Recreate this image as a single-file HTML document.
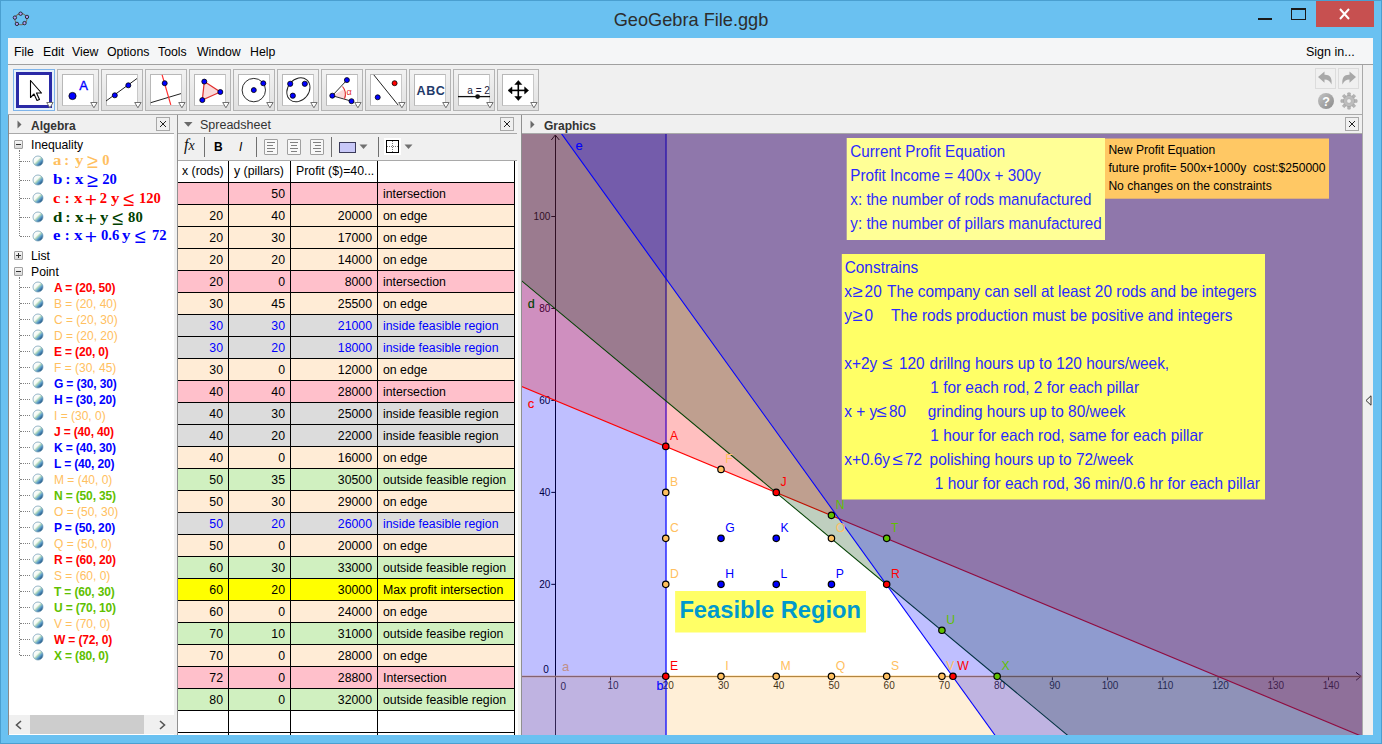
<!DOCTYPE html>
<html><head><meta charset="utf-8"><style>
*{margin:0;padding:0;box-sizing:border-box}
html,body{width:1382px;height:744px;overflow:hidden;background:#6ac1f1;font-family:"Liberation Sans",sans-serif;position:relative}
.ab{position:absolute}
.t{position:absolute;white-space:pre;line-height:1}
svg{overflow:visible}
</style></head><body>
<div class="ab" style="left:0;top:0;width:1px;height:744px;background:#4a9fd0"></div>
<div class="ab" style="left:1381px;top:0;width:1px;height:744px;background:#4a9fd0"></div>
<div class="ab" style="left:0;top:743px;width:1382px;height:1px;background:#4a9fd0"></div>
<div class="ab" style="left:0;top:0;width:1382px;height:1px;background:#4a9fd0"></div>
<div class="t" style="left:0;width:1382px;text-align:center;top:11px;font-size:18.2px;color:#2d2d2d">GeoGebra File.ggb</div>
<svg class="ab" style="left:0px;top:0px" width="40" height="40" viewBox="0 0 40 40">
<ellipse cx="20.9" cy="19.2" rx="6.1" ry="5.6" transform="rotate(-10 20.9 19.2)" fill="none" stroke="#7a6a5a" stroke-width="1"/>
<circle cx="20.6" cy="13.7" r="1.7" fill="#a89cf4" stroke="#111" stroke-width=".8"/>
<circle cx="27" cy="16.9" r="1.7" fill="#a89cf4" stroke="#111" stroke-width=".8"/>
<circle cx="24.5" cy="23.1" r="1.7" fill="#a89cf4" stroke="#111" stroke-width=".8"/>
<circle cx="16.9" cy="23.9" r="1.7" fill="#a89cf4" stroke="#111" stroke-width=".8"/>
<circle cx="14.9" cy="17.6" r="1.7" fill="#a89cf4" stroke="#111" stroke-width=".8"/>
</svg>
<div class="ab" style="left:1258px;top:18px;width:14px;height:2px;background:#1a1a1a"></div>
<div class="ab" style="left:1291px;top:8px;width:15px;height:12px;border:1px solid #1a1a1a;border-top-width:2px"></div>
<div class="ab" style="left:1316px;top:1px;width:58px;height:26px;background:#c75050"></div>
<svg class="ab" style="left:1338px;top:8px" width="13" height="12" viewBox="0 0 13 12"><path d="M2 1 L11 11 M11 1 L2 11" stroke="#fff" stroke-width="2"/></svg>
<div class="ab" style="left:8px;top:38px;width:1365px;height:26px;background:#f5f6f7"></div>
<div class="ab" style="left:8px;top:64px;width:1365px;height:1px;background:#a0a0a0"></div>
<div class="t" style="left:14px;top:45.6px;font-size:12.3px;color:#000">File</div>
<div class="t" style="left:43px;top:45.6px;font-size:12.3px;color:#000">Edit</div>
<div class="t" style="left:72px;top:45.6px;font-size:12.3px;color:#000">View</div>
<div class="t" style="left:107px;top:45.6px;font-size:12.3px;color:#000">Options</div>
<div class="t" style="left:158px;top:45.6px;font-size:12.3px;color:#000">Tools</div>
<div class="t" style="left:197px;top:45.6px;font-size:12.3px;color:#000">Window</div>
<div class="t" style="left:250px;top:45.6px;font-size:12.3px;color:#000">Help</div>
<div class="t" style="left:1306px;top:46px;font-size:12.5px;color:#000">Sign in...</div>
<div class="ab" style="left:8px;top:65px;width:1365px;height:670px;background:#f0f0f0"></div>
<div class="ab" style="left:8px;top:114px;width:1355px;height:1px;background:#a9a9a9"></div>
<div class="ab" style="left:1362px;top:65px;width:1px;height:670px;background:#a9a9a9"></div>
<div class="ab" style="left:13px;top:69px;width:42px;height:42px;border:1px solid #7eb4ea;background:#e5f1fb"></div>
<div class="ab" style="left:16px;top:72px;width:36px;height:36px;border:3px solid #2a2aa6;background:#fff"></div>
<svg class="ab" style="left:13px;top:69px" width="42" height="42" viewBox="0 0 42 42"><path d="M17.5 11.5 L17.5 28.5 L21 25 L24 31.5 L26.5 30.5 L23.5 24 L28.5 24 Z" fill="#fff" stroke="#000" stroke-width="1.1" stroke-linejoin="round"/><path d="M33.7 33.5 L40.1 33.5 L36.9 38.8 Z" fill="#fff" stroke="#707070" stroke-width="1"/></svg>
<div class="ab" style="left:57px;top:69px;width:42px;height:42px;border:1px solid #b4b4b4;background:linear-gradient(#f2f2f2,#e0e0e0)"></div>
<div class="ab" style="left:62px;top:74px;width:32px;height:32px;border:1px solid #c8c8c8;border-left-color:#b8b8b8;border-top-color:#b8b8b8;background:#fff"></div>
<svg class="ab" style="left:57px;top:69px" width="42" height="42" viewBox="0 0 42 42"><circle cx="15.5" cy="27" r="3.6" fill="#0000ff" stroke="#000" stroke-width=".8"/><text x="22.2" y="20.5" font-family="Liberation Sans" font-size="13" fill="#0000ff" stroke="#0000ff" stroke-width=".35">A</text><path d="M33.7 33.5 L40.1 33.5 L36.9 38.8 Z" fill="#fff" stroke="#707070" stroke-width="1"/></svg>
<div class="ab" style="left:101px;top:69px;width:42px;height:42px;border:1px solid #b4b4b4;background:linear-gradient(#f2f2f2,#e0e0e0)"></div>
<div class="ab" style="left:106px;top:74px;width:32px;height:32px;border:1px solid #c8c8c8;border-left-color:#b8b8b8;border-top-color:#b8b8b8;background:#fff"></div>
<svg class="ab" style="left:101px;top:69px" width="42" height="42" viewBox="0 0 42 42"><line x1="5" y1="32" x2="36" y2="9.5" stroke="#222" stroke-width="1"/><circle cx="13.8" cy="26.3" r="2.5" fill="#0000ff" stroke="#000" stroke-width=".8"/><circle cx="27.3" cy="16.3" r="2.5" fill="#0000ff" stroke="#000" stroke-width=".8"/><path d="M33.7 33.5 L40.1 33.5 L36.9 38.8 Z" fill="#fff" stroke="#707070" stroke-width="1"/></svg>
<div class="ab" style="left:145px;top:69px;width:42px;height:42px;border:1px solid #b4b4b4;background:linear-gradient(#f2f2f2,#e0e0e0)"></div>
<div class="ab" style="left:150px;top:74px;width:32px;height:32px;border:1px solid #c8c8c8;border-left-color:#b8b8b8;border-top-color:#b8b8b8;background:#fff"></div>
<svg class="ab" style="left:145px;top:69px" width="42" height="42" viewBox="0 0 42 42"><line x1="5.7" y1="33.7" x2="36" y2="24.6" stroke="#222" stroke-width="1"/><line x1="17.1" y1="5.9" x2="25.8" y2="35.8" stroke="#ff3030" stroke-width="1.2"/><circle cx="19.7" cy="14.2" r="2.5" fill="#0000ff" stroke="#000" stroke-width=".8"/><path d="M33.7 33.5 L40.1 33.5 L36.9 38.8 Z" fill="#fff" stroke="#707070" stroke-width="1"/></svg>
<div class="ab" style="left:189px;top:69px;width:42px;height:42px;border:1px solid #b4b4b4;background:linear-gradient(#f2f2f2,#e0e0e0)"></div>
<div class="ab" style="left:194px;top:74px;width:32px;height:32px;border:1px solid #c8c8c8;border-left-color:#b8b8b8;border-top-color:#b8b8b8;background:#fff"></div>
<svg class="ab" style="left:189px;top:69px" width="42" height="42" viewBox="0 0 42 42"><path d="M15.3 12.6 L31.3 23 L13.3 31.1 Z" fill="#fadada" stroke="#e03030" stroke-width="1.2"/><circle cx="15.3" cy="12.6" r="2.5" fill="#0000ff" stroke="#000" stroke-width=".8"/><circle cx="31.3" cy="23" r="2.5" fill="#0000ff" stroke="#000" stroke-width=".8"/><circle cx="13.3" cy="31.1" r="2.5" fill="#0000ff" stroke="#000" stroke-width=".8"/><path d="M33.7 33.5 L40.1 33.5 L36.9 38.8 Z" fill="#fff" stroke="#707070" stroke-width="1"/></svg>
<div class="ab" style="left:233px;top:69px;width:42px;height:42px;border:1px solid #b4b4b4;background:linear-gradient(#f2f2f2,#e0e0e0)"></div>
<div class="ab" style="left:238px;top:74px;width:32px;height:32px;border:1px solid #c8c8c8;border-left-color:#b8b8b8;border-top-color:#b8b8b8;background:#fff"></div>
<svg class="ab" style="left:233px;top:69px" width="42" height="42" viewBox="0 0 42 42"><circle cx="20.8" cy="21.1" r="11.7" fill="none" stroke="#222" stroke-width=".95"/><circle cx="20.8" cy="21.1" r="2.5" fill="#0000ff" stroke="#000" stroke-width=".8"/><circle cx="30.3" cy="14.3" r="2.5" fill="#0000ff" stroke="#000" stroke-width=".8"/><path d="M33.7 33.5 L40.1 33.5 L36.9 38.8 Z" fill="#fff" stroke="#707070" stroke-width="1"/></svg>
<div class="ab" style="left:277px;top:69px;width:42px;height:42px;border:1px solid #b4b4b4;background:linear-gradient(#f2f2f2,#e0e0e0)"></div>
<div class="ab" style="left:282px;top:74px;width:32px;height:32px;border:1px solid #c8c8c8;border-left-color:#b8b8b8;border-top-color:#b8b8b8;background:#fff"></div>
<svg class="ab" style="left:277px;top:69px" width="42" height="42" viewBox="0 0 42 42"><ellipse cx="21.4" cy="20.8" rx="13" ry="10.5" transform="rotate(-50 21.4 20.8)" fill="none" stroke="#222" stroke-width=".95"/><circle cx="13.2" cy="14.8" r="2.6" fill="#0000ff" stroke="#000" stroke-width=".8"/><circle cx="27.8" cy="14.8" r="2.6" fill="#0000ff" stroke="#000" stroke-width=".8"/><circle cx="15.8" cy="26.7" r="2.6" fill="#0000ff" stroke="#000" stroke-width=".8"/><path d="M33.7 33.5 L40.1 33.5 L36.9 38.8 Z" fill="#fff" stroke="#707070" stroke-width="1"/></svg>
<div class="ab" style="left:321px;top:69px;width:42px;height:42px;border:1px solid #b4b4b4;background:linear-gradient(#f2f2f2,#e0e0e0)"></div>
<div class="ab" style="left:326px;top:74px;width:32px;height:32px;border:1px solid #c8c8c8;border-left-color:#b8b8b8;border-top-color:#b8b8b8;background:#fff"></div>
<svg class="ab" style="left:321px;top:69px" width="42" height="42" viewBox="0 0 42 42"><path d="M11.3 26.7 L22.5 20.5 A12 12 0 0 1 24.2 29.5 Z" fill="#fadada"/><line x1="11.3" y1="26.7" x2="25.9" y2="11.1" stroke="#222" stroke-width=".95"/><line x1="11.3" y1="26.7" x2="30.5" y2="32.2" stroke="#222" stroke-width=".95"/><path d="M21.5 17.5 A12 12 0 0 1 23.5 29.8" fill="none" stroke="#e03030" stroke-width="1.1"/><text x="25.5" y="25.5" font-family="Liberation Sans" font-size="9" fill="#e03030">α</text><circle cx="11.3" cy="26.7" r="2.5" fill="#0000ff" stroke="#000" stroke-width=".8"/><circle cx="25.9" cy="11.1" r="2.5" fill="#0000ff" stroke="#000" stroke-width=".8"/><circle cx="30.5" cy="32.2" r="2.5" fill="#0000ff" stroke="#000" stroke-width=".8"/><path d="M33.7 33.5 L40.1 33.5 L36.9 38.8 Z" fill="#fff" stroke="#707070" stroke-width="1"/></svg>
<div class="ab" style="left:365px;top:69px;width:42px;height:42px;border:1px solid #b4b4b4;background:linear-gradient(#f2f2f2,#e0e0e0)"></div>
<div class="ab" style="left:370px;top:74px;width:32px;height:32px;border:1px solid #c8c8c8;border-left-color:#b8b8b8;border-top-color:#b8b8b8;background:#fff"></div>
<svg class="ab" style="left:365px;top:69px" width="42" height="42" viewBox="0 0 42 42"><line x1="8.8" y1="5.9" x2="33.1" y2="36" stroke="#222" stroke-width="1"/><circle cx="29.6" cy="14.2" r="2.5" fill="#ff0000" stroke="#000" stroke-width=".8"/><circle cx="12.7" cy="28.3" r="2.5" fill="#0000ff" stroke="#000" stroke-width=".8"/><path d="M33.7 33.5 L40.1 33.5 L36.9 38.8 Z" fill="#fff" stroke="#707070" stroke-width="1"/></svg>
<div class="ab" style="left:409px;top:69px;width:42px;height:42px;border:1px solid #b4b4b4;background:linear-gradient(#f2f2f2,#e0e0e0)"></div>
<div class="ab" style="left:414px;top:74px;width:32px;height:32px;border:1px solid #c8c8c8;border-left-color:#b8b8b8;border-top-color:#b8b8b8;background:#fff"></div>
<svg class="ab" style="left:409px;top:69px" width="42" height="42" viewBox="0 0 42 42"><text x="7.5" y="25.5" font-family="Liberation Sans" font-size="12.5" fill="#1f3a6a" font-weight="bold" letter-spacing=".6">ABC</text><path d="M33.7 33.5 L40.1 33.5 L36.9 38.8 Z" fill="#fff" stroke="#707070" stroke-width="1"/></svg>
<div class="ab" style="left:453px;top:69px;width:42px;height:42px;border:1px solid #b4b4b4;background:linear-gradient(#f2f2f2,#e0e0e0)"></div>
<div class="ab" style="left:458px;top:74px;width:32px;height:32px;border:1px solid #c8c8c8;border-left-color:#b8b8b8;border-top-color:#b8b8b8;background:#fff"></div>
<svg class="ab" style="left:453px;top:69px" width="42" height="42" viewBox="0 0 42 42"><text x="14.3" y="24.5" font-family="Liberation Sans" font-size="10" fill="#1a1a3a">a = 2</text><line x1="5" y1="27.6" x2="37" y2="27.6" stroke="#111" stroke-width="1.3"/><circle cx="24.6" cy="27.6" r="2.4" fill="#111"/><path d="M33.7 33.5 L40.1 33.5 L36.9 38.8 Z" fill="#fff" stroke="#707070" stroke-width="1"/></svg>
<div class="ab" style="left:497px;top:69px;width:42px;height:42px;border:1px solid #b4b4b4;background:linear-gradient(#f2f2f2,#e0e0e0)"></div>
<div class="ab" style="left:502px;top:74px;width:32px;height:32px;border:1px solid #c8c8c8;border-left-color:#b8b8b8;border-top-color:#b8b8b8;background:#fff"></div>
<svg class="ab" style="left:497px;top:69px" width="42" height="42" viewBox="0 0 42 42"><g fill="#000" stroke="#000"><line x1="21.3" y1="13" x2="21.3" y2="30" stroke-width="1.6"/><line x1="12.5" y1="21.4" x2="30" y2="21.4" stroke-width="1.6"/><path d="M21.3 11.5 L17.8 15.5 L24.8 15.5 Z" stroke-width=".5"/><path d="M21.3 31.5 L17.8 27.5 L24.8 27.5 Z" stroke-width=".5"/><path d="M11 21.4 L15 17.9 L15 24.9 Z" stroke-width=".5"/><path d="M31.6 21.4 L27.6 17.9 L27.6 24.9 Z" stroke-width=".5"/></g><path d="M33.7 33.5 L40.1 33.5 L36.9 38.8 Z" fill="#fff" stroke="#707070" stroke-width="1"/></svg>
<div class="ab" style="left:1315px;top:68px;width:21px;height:21px;border:1px solid #dcdcdc"></div>
<div class="ab" style="left:1338px;top:68px;width:21px;height:21px;border:1px solid #dcdcdc"></div>
<svg class="ab" style="left:1315px;top:68px" width="21" height="21" viewBox="0 0 21 21"><path d="M3 9 L9.5 3.5 L9.5 6.8 C14.5 6.5 17.5 9.5 16.5 16.5 C15 13 13 11.5 9.5 11.5 L9.5 14.8 Z" fill="#a8a8a8"/></svg>
<svg class="ab" style="left:1338px;top:68px" width="21" height="21" viewBox="0 0 21 21"><path d="M18 9 L11.5 3.5 L11.5 6.8 C6.5 6.5 3.5 9.5 4.5 16.5 C6 13 8 11.5 11.5 11.5 L11.5 14.8 Z" fill="#a8a8a8"/></svg>
<svg class="ab" style="left:1317px;top:92px" width="18" height="18" viewBox="0 0 18 18"><defs><linearGradient id="hg" x1="0" y1="0" x2="1" y2="1"><stop offset="0" stop-color="#c4c4c4"/><stop offset="1" stop-color="#8a8a8a"/></linearGradient></defs><circle cx="9" cy="9" r="8" fill="url(#hg)"/><text x="9" y="13.5" text-anchor="middle" font-family="Liberation Sans" font-weight="bold" font-size="12.5" fill="#fff">?</text></svg>
<svg class="ab" style="left:1340px;top:92px" width="18" height="18" viewBox="0 0 18 18"><rect x="7.6" y="0.8" width="2.8" height="4" rx=".4" fill="#b4b4b4" stroke="#9a9a9a" stroke-width=".4" transform="rotate(0 9 9)"/><rect x="7.6" y="0.8" width="2.8" height="4" rx=".4" fill="#b4b4b4" stroke="#9a9a9a" stroke-width=".4" transform="rotate(45 9 9)"/><rect x="7.6" y="0.8" width="2.8" height="4" rx=".4" fill="#b4b4b4" stroke="#9a9a9a" stroke-width=".4" transform="rotate(90 9 9)"/><rect x="7.6" y="0.8" width="2.8" height="4" rx=".4" fill="#b4b4b4" stroke="#9a9a9a" stroke-width=".4" transform="rotate(135 9 9)"/><rect x="7.6" y="0.8" width="2.8" height="4" rx=".4" fill="#b4b4b4" stroke="#9a9a9a" stroke-width=".4" transform="rotate(180 9 9)"/><rect x="7.6" y="0.8" width="2.8" height="4" rx=".4" fill="#b4b4b4" stroke="#9a9a9a" stroke-width=".4" transform="rotate(225 9 9)"/><rect x="7.6" y="0.8" width="2.8" height="4" rx=".4" fill="#b4b4b4" stroke="#9a9a9a" stroke-width=".4" transform="rotate(270 9 9)"/><rect x="7.6" y="0.8" width="2.8" height="4" rx=".4" fill="#b4b4b4" stroke="#9a9a9a" stroke-width=".4" transform="rotate(315 9 9)"/><circle cx="9" cy="9" r="5.6" fill="#bdbdbd" stroke="#9a9a9a" stroke-width=".5"/><circle cx="9" cy="9" r="2.3" fill="#efefef" stroke="#a0a0a0" stroke-width=".5"/></svg>
<svg width="0" height="0" style="position:absolute"><defs><linearGradient id="sph" x1="0.15" y1="0.15" x2="0.85" y2="0.85"><stop offset="0" stop-color="#ffffff"/><stop offset=".38" stop-color="#f4faf4"/><stop offset=".5" stop-color="#b8dcc0"/><stop offset=".72" stop-color="#5a9cc8"/><stop offset="1" stop-color="#1e4e7e"/></linearGradient></defs></svg>
<div class="ab" style="left:8px;top:115px;width:166px;height:18px;background:#f0f0f0"></div>
<div class="ab" style="left:8px;top:133px;width:166px;height:1px;background:#a9a9a9"></div>
<div class="ab" style="left:8px;top:134px;width:166px;height:601px;background:#fff"></div>
<div class="ab" style="left:8px;top:115px;width:1px;height:620px;background:#8a8a8a"></div>
<svg class="ab" style="left:17px;top:120px" width="5" height="9" viewBox="0 0 5 9"><path d="M0.5 0.5 L4.5 4.5 L0.5 8.5 Z" fill="#6a6a6a"/></svg>
<div class="t" style="left:31px;top:119.5px;font-size:12px;font-weight:bold;color:#333">Algebra</div>
<div class="ab" style="left:156px;top:117px;width:14px;height:14px;border:1px solid #a8a8a8;background:#f0f0f0"></div>
<svg class="ab" style="left:156px;top:117px" width="14" height="14" viewBox="0 0 14 14"><path d="M4 4 L10 10 M10 4 L4 10" stroke="#222" stroke-width="1"/></svg>
<div class="ab" style="left:14px;top:140px;width:9px;height:9px;border:1px solid #a0a0a0;border-radius:1px;background:linear-gradient(#f8f8f8,#d8d8d8)"></div><div class="ab" style="left:16px;top:144px;width:5px;height:1px;background:#333"></div>
<div class="t" style="left:31px;top:138.5px;font-size:12.2px;color:#000">Inequality</div>
<div class="ab" style="left:19px;top:150px;width:1px;height:86px;border-left:1px dotted #808080"></div>
<div class="ab" style="left:20px;top:161px;width:10px;height:1px;border-top:1px dotted #808080"></div>
<svg class="ab" style="left:32px;top:155px" width="12" height="12" viewBox="0 0 12 12"><circle cx="6" cy="6" r="5" fill="url(#sph)" stroke="#6a98b0" stroke-width=".7"/></svg>
<div class="t" style="left:52.80px;top:153.34px;font-size:14.6px;font-weight:bold;color:#ffc060;font-family:'Liberation Serif',serif;transform:scaleX(1.15);transform-origin:0 0;">a</div>
<div class="t" style="left:64.20px;top:153.34px;font-size:14.6px;font-weight:bold;color:#ffc060;font-family:'Liberation Serif',serif;">:</div>
<div class="t" style="left:74.50px;top:153.34px;font-size:14.6px;font-weight:bold;color:#ffc060;font-family:'Liberation Serif',serif;transform:scaleX(1.15);transform-origin:0 0;">y</div>
<div class="t" style="left:86.80px;top:151.37px;font-size:20px;font-weight:normal;color:#ffc060;">≥</div>
<div class="t" style="left:102.30px;top:153.34px;font-size:14.6px;font-weight:bold;color:#ffc060;font-family:'Liberation Serif',serif;">0</div>
<div class="ab" style="left:20px;top:180px;width:10px;height:1px;border-top:1px dotted #808080"></div>
<svg class="ab" style="left:32px;top:173.7px" width="12" height="12" viewBox="0 0 12 12"><circle cx="6" cy="6" r="5" fill="url(#sph)" stroke="#6a98b0" stroke-width=".7"/></svg>
<div class="t" style="left:53.20px;top:171.94px;font-size:14.6px;font-weight:bold;color:#0000ff;font-family:'Liberation Serif',serif;transform:scaleX(1.15);transform-origin:0 0;">b</div>
<div class="t" style="left:65.50px;top:171.94px;font-size:14.6px;font-weight:bold;color:#0000ff;font-family:'Liberation Serif',serif;">:</div>
<div class="t" style="left:74.50px;top:171.94px;font-size:14.6px;font-weight:bold;color:#0000ff;font-family:'Liberation Serif',serif;transform:scaleX(1.15);transform-origin:0 0;">x</div>
<div class="t" style="left:86.80px;top:169.97px;font-size:20px;font-weight:normal;color:#0000ff;">≥</div>
<div class="t" style="left:102.30px;top:171.94px;font-size:14.6px;font-weight:bold;color:#0000ff;font-family:'Liberation Serif',serif;">20</div>
<div class="ab" style="left:20px;top:198px;width:10px;height:1px;border-top:1px dotted #808080"></div>
<svg class="ab" style="left:32px;top:192.4px" width="12" height="12" viewBox="0 0 12 12"><circle cx="6" cy="6" r="5" fill="url(#sph)" stroke="#6a98b0" stroke-width=".7"/></svg>
<div class="t" style="left:52.80px;top:191.04px;font-size:14.6px;font-weight:bold;color:#ff0000;font-family:'Liberation Serif',serif;transform:scaleX(1.15);transform-origin:0 0;">c</div>
<div class="t" style="left:64.80px;top:191.04px;font-size:14.6px;font-weight:bold;color:#ff0000;font-family:'Liberation Serif',serif;">:</div>
<div class="t" style="left:73.90px;top:191.04px;font-size:14.6px;font-weight:bold;color:#ff0000;font-family:'Liberation Serif',serif;transform:scaleX(1.15);transform-origin:0 0;">x</div>
<div class="t" style="left:84.80px;top:189.22px;font-size:21px;font-weight:normal;color:#ff0000;">+</div>
<div class="t" style="left:99.70px;top:191.04px;font-size:14.6px;font-weight:bold;color:#ff0000;font-family:'Liberation Serif',serif;">2</div>
<div class="t" style="left:110.60px;top:191.04px;font-size:14.6px;font-weight:bold;color:#ff0000;font-family:'Liberation Serif',serif;transform:scaleX(1.15);transform-origin:0 0;">y</div>
<div class="t" style="left:122.90px;top:189.07px;font-size:20px;font-weight:normal;color:#ff0000;">≤</div>
<div class="t" style="left:139.00px;top:191.04px;font-size:14.6px;font-weight:bold;color:#ff0000;font-family:'Liberation Serif',serif;">120</div>
<div class="ab" style="left:20px;top:217px;width:10px;height:1px;border-top:1px dotted #808080"></div>
<svg class="ab" style="left:32px;top:211.1px" width="12" height="12" viewBox="0 0 12 12"><circle cx="6" cy="6" r="5" fill="url(#sph)" stroke="#6a98b0" stroke-width=".7"/></svg>
<div class="t" style="left:52.80px;top:209.74px;font-size:14.6px;font-weight:bold;color:#004000;font-family:'Liberation Serif',serif;transform:scaleX(1.15);transform-origin:0 0;">d</div>
<div class="t" style="left:65.50px;top:209.74px;font-size:14.6px;font-weight:bold;color:#004000;font-family:'Liberation Serif',serif;">:</div>
<div class="t" style="left:74.50px;top:209.74px;font-size:14.6px;font-weight:bold;color:#004000;font-family:'Liberation Serif',serif;transform:scaleX(1.15);transform-origin:0 0;">x</div>
<div class="t" style="left:84.80px;top:207.92px;font-size:21px;font-weight:normal;color:#004000;">+</div>
<div class="t" style="left:99.70px;top:209.74px;font-size:14.6px;font-weight:bold;color:#004000;font-family:'Liberation Serif',serif;transform:scaleX(1.15);transform-origin:0 0;">y</div>
<div class="t" style="left:111.90px;top:207.77px;font-size:20px;font-weight:normal;color:#004000;">≤</div>
<div class="t" style="left:128.10px;top:209.74px;font-size:14.6px;font-weight:bold;color:#004000;font-family:'Liberation Serif',serif;">80</div>
<div class="ab" style="left:20px;top:236px;width:10px;height:1px;border-top:1px dotted #808080"></div>
<svg class="ab" style="left:32px;top:229.8px" width="12" height="12" viewBox="0 0 12 12"><circle cx="6" cy="6" r="5" fill="url(#sph)" stroke="#6a98b0" stroke-width=".7"/></svg>
<div class="t" style="left:52.80px;top:227.84px;font-size:14.6px;font-weight:bold;color:#0000ff;font-family:'Liberation Serif',serif;transform:scaleX(1.15);transform-origin:0 0;">e</div>
<div class="t" style="left:64.80px;top:227.84px;font-size:14.6px;font-weight:bold;color:#0000ff;font-family:'Liberation Serif',serif;">:</div>
<div class="t" style="left:73.90px;top:227.84px;font-size:14.6px;font-weight:bold;color:#0000ff;font-family:'Liberation Serif',serif;transform:scaleX(1.15);transform-origin:0 0;">x</div>
<div class="t" style="left:84.80px;top:226.02px;font-size:21px;font-weight:normal;color:#0000ff;">+</div>
<div class="t" style="left:101.00px;top:227.84px;font-size:14.6px;font-weight:bold;color:#0000ff;font-family:'Liberation Serif',serif;">0.6</div>
<div class="t" style="left:122.30px;top:227.84px;font-size:14.6px;font-weight:bold;color:#0000ff;font-family:'Liberation Serif',serif;transform:scaleX(1.15);transform-origin:0 0;">y</div>
<div class="t" style="left:134.50px;top:225.87px;font-size:20px;font-weight:normal;color:#0000ff;">≤</div>
<div class="t" style="left:152.00px;top:227.84px;font-size:14.6px;font-weight:bold;color:#0000ff;font-family:'Liberation Serif',serif;">72</div>
<div class="ab" style="left:14px;top:251px;width:9px;height:9px;border:1px solid #a0a0a0;border-radius:1px;background:linear-gradient(#f8f8f8,#d8d8d8)"></div><div class="ab" style="left:16px;top:255px;width:5px;height:1px;background:#333"></div><div class="ab" style="left:18px;top:253px;width:1px;height:5px;background:#333"></div>
<div class="t" style="left:31px;top:250px;font-size:12.2px;color:#000">List</div>
<div class="ab" style="left:14px;top:267px;width:9px;height:9px;border:1px solid #a0a0a0;border-radius:1px;background:linear-gradient(#f8f8f8,#d8d8d8)"></div><div class="ab" style="left:16px;top:271px;width:5px;height:1px;background:#333"></div>
<div class="t" style="left:31px;top:266px;font-size:12.2px;color:#000">Point</div>
<div class="ab" style="left:19px;top:277px;width:1px;height:378px;border-left:1px dotted #808080"></div>
<div class="ab" style="left:20px;top:287px;width:10px;height:1px;border-top:1px dotted #808080"></div>
<svg class="ab" style="left:32px;top:281px" width="12" height="12" viewBox="0 0 12 12"><circle cx="6" cy="6" r="5" fill="url(#sph)" stroke="#6a98b0" stroke-width=".7"/></svg>
<div class="t" style="left:54px;top:282.14px;font-size:12px;font-weight:bold;color:#ff0000;letter-spacing:-.15px">A = (20, 50)</div>
<div class="ab" style="left:20px;top:303px;width:10px;height:1px;border-top:1px dotted #808080"></div>
<svg class="ab" style="left:32px;top:297px" width="12" height="12" viewBox="0 0 12 12"><circle cx="6" cy="6" r="5" fill="url(#sph)" stroke="#6a98b0" stroke-width=".7"/></svg>
<div class="t" style="left:54px;top:298.14px;font-size:12px;font-weight:normal;color:#ffc060;letter-spacing:0">B = (20, 40)</div>
<div class="ab" style="left:20px;top:319px;width:10px;height:1px;border-top:1px dotted #808080"></div>
<svg class="ab" style="left:32px;top:313px" width="12" height="12" viewBox="0 0 12 12"><circle cx="6" cy="6" r="5" fill="url(#sph)" stroke="#6a98b0" stroke-width=".7"/></svg>
<div class="t" style="left:54px;top:314.14px;font-size:12px;font-weight:normal;color:#ffc060;letter-spacing:0">C = (20, 30)</div>
<div class="ab" style="left:20px;top:335px;width:10px;height:1px;border-top:1px dotted #808080"></div>
<svg class="ab" style="left:32px;top:329px" width="12" height="12" viewBox="0 0 12 12"><circle cx="6" cy="6" r="5" fill="url(#sph)" stroke="#6a98b0" stroke-width=".7"/></svg>
<div class="t" style="left:54px;top:330.14px;font-size:12px;font-weight:normal;color:#ffc060;letter-spacing:0">D = (20, 20)</div>
<div class="ab" style="left:20px;top:351px;width:10px;height:1px;border-top:1px dotted #808080"></div>
<svg class="ab" style="left:32px;top:345px" width="12" height="12" viewBox="0 0 12 12"><circle cx="6" cy="6" r="5" fill="url(#sph)" stroke="#6a98b0" stroke-width=".7"/></svg>
<div class="t" style="left:54px;top:346.14px;font-size:12px;font-weight:bold;color:#ff0000;letter-spacing:-.15px">E = (20, 0)</div>
<div class="ab" style="left:20px;top:367px;width:10px;height:1px;border-top:1px dotted #808080"></div>
<svg class="ab" style="left:32px;top:361px" width="12" height="12" viewBox="0 0 12 12"><circle cx="6" cy="6" r="5" fill="url(#sph)" stroke="#6a98b0" stroke-width=".7"/></svg>
<div class="t" style="left:54px;top:362.14px;font-size:12px;font-weight:normal;color:#ffc060;letter-spacing:0">F = (30, 45)</div>
<div class="ab" style="left:20px;top:383px;width:10px;height:1px;border-top:1px dotted #808080"></div>
<svg class="ab" style="left:32px;top:377px" width="12" height="12" viewBox="0 0 12 12"><circle cx="6" cy="6" r="5" fill="url(#sph)" stroke="#6a98b0" stroke-width=".7"/></svg>
<div class="t" style="left:54px;top:378.14px;font-size:12px;font-weight:bold;color:#0000ff;letter-spacing:-.15px">G = (30, 30)</div>
<div class="ab" style="left:20px;top:399px;width:10px;height:1px;border-top:1px dotted #808080"></div>
<svg class="ab" style="left:32px;top:393px" width="12" height="12" viewBox="0 0 12 12"><circle cx="6" cy="6" r="5" fill="url(#sph)" stroke="#6a98b0" stroke-width=".7"/></svg>
<div class="t" style="left:54px;top:394.14px;font-size:12px;font-weight:bold;color:#0000ff;letter-spacing:-.15px">H = (30, 20)</div>
<div class="ab" style="left:20px;top:415px;width:10px;height:1px;border-top:1px dotted #808080"></div>
<svg class="ab" style="left:32px;top:409px" width="12" height="12" viewBox="0 0 12 12"><circle cx="6" cy="6" r="5" fill="url(#sph)" stroke="#6a98b0" stroke-width=".7"/></svg>
<div class="t" style="left:54px;top:410.14px;font-size:12px;font-weight:normal;color:#ffc060;letter-spacing:0">I = (30, 0)</div>
<div class="ab" style="left:20px;top:431px;width:10px;height:1px;border-top:1px dotted #808080"></div>
<svg class="ab" style="left:32px;top:425px" width="12" height="12" viewBox="0 0 12 12"><circle cx="6" cy="6" r="5" fill="url(#sph)" stroke="#6a98b0" stroke-width=".7"/></svg>
<div class="t" style="left:54px;top:426.14px;font-size:12px;font-weight:bold;color:#ff0000;letter-spacing:-.15px">J = (40, 40)</div>
<div class="ab" style="left:20px;top:447px;width:10px;height:1px;border-top:1px dotted #808080"></div>
<svg class="ab" style="left:32px;top:441px" width="12" height="12" viewBox="0 0 12 12"><circle cx="6" cy="6" r="5" fill="url(#sph)" stroke="#6a98b0" stroke-width=".7"/></svg>
<div class="t" style="left:54px;top:442.14px;font-size:12px;font-weight:bold;color:#0000ff;letter-spacing:-.15px">K = (40, 30)</div>
<div class="ab" style="left:20px;top:463px;width:10px;height:1px;border-top:1px dotted #808080"></div>
<svg class="ab" style="left:32px;top:457px" width="12" height="12" viewBox="0 0 12 12"><circle cx="6" cy="6" r="5" fill="url(#sph)" stroke="#6a98b0" stroke-width=".7"/></svg>
<div class="t" style="left:54px;top:458.14px;font-size:12px;font-weight:bold;color:#0000ff;letter-spacing:-.15px">L = (40, 20)</div>
<div class="ab" style="left:20px;top:479px;width:10px;height:1px;border-top:1px dotted #808080"></div>
<svg class="ab" style="left:32px;top:473px" width="12" height="12" viewBox="0 0 12 12"><circle cx="6" cy="6" r="5" fill="url(#sph)" stroke="#6a98b0" stroke-width=".7"/></svg>
<div class="t" style="left:54px;top:474.14px;font-size:12px;font-weight:normal;color:#ffc060;letter-spacing:0">M = (40, 0)</div>
<div class="ab" style="left:20px;top:495px;width:10px;height:1px;border-top:1px dotted #808080"></div>
<svg class="ab" style="left:32px;top:489px" width="12" height="12" viewBox="0 0 12 12"><circle cx="6" cy="6" r="5" fill="url(#sph)" stroke="#6a98b0" stroke-width=".7"/></svg>
<div class="t" style="left:54px;top:490.14px;font-size:12px;font-weight:bold;color:#60c000;letter-spacing:-.15px">N = (50, 35)</div>
<div class="ab" style="left:20px;top:511px;width:10px;height:1px;border-top:1px dotted #808080"></div>
<svg class="ab" style="left:32px;top:505px" width="12" height="12" viewBox="0 0 12 12"><circle cx="6" cy="6" r="5" fill="url(#sph)" stroke="#6a98b0" stroke-width=".7"/></svg>
<div class="t" style="left:54px;top:506.14px;font-size:12px;font-weight:normal;color:#ffc060;letter-spacing:0">O = (50, 30)</div>
<div class="ab" style="left:20px;top:527px;width:10px;height:1px;border-top:1px dotted #808080"></div>
<svg class="ab" style="left:32px;top:521px" width="12" height="12" viewBox="0 0 12 12"><circle cx="6" cy="6" r="5" fill="url(#sph)" stroke="#6a98b0" stroke-width=".7"/></svg>
<div class="t" style="left:54px;top:522.14px;font-size:12px;font-weight:bold;color:#0000ff;letter-spacing:-.15px">P = (50, 20)</div>
<div class="ab" style="left:20px;top:543px;width:10px;height:1px;border-top:1px dotted #808080"></div>
<svg class="ab" style="left:32px;top:537px" width="12" height="12" viewBox="0 0 12 12"><circle cx="6" cy="6" r="5" fill="url(#sph)" stroke="#6a98b0" stroke-width=".7"/></svg>
<div class="t" style="left:54px;top:538.14px;font-size:12px;font-weight:normal;color:#ffc060;letter-spacing:0">Q = (50, 0)</div>
<div class="ab" style="left:20px;top:559px;width:10px;height:1px;border-top:1px dotted #808080"></div>
<svg class="ab" style="left:32px;top:553px" width="12" height="12" viewBox="0 0 12 12"><circle cx="6" cy="6" r="5" fill="url(#sph)" stroke="#6a98b0" stroke-width=".7"/></svg>
<div class="t" style="left:54px;top:554.14px;font-size:12px;font-weight:bold;color:#ff0000;letter-spacing:-.15px">R = (60, 20)</div>
<div class="ab" style="left:20px;top:575px;width:10px;height:1px;border-top:1px dotted #808080"></div>
<svg class="ab" style="left:32px;top:569px" width="12" height="12" viewBox="0 0 12 12"><circle cx="6" cy="6" r="5" fill="url(#sph)" stroke="#6a98b0" stroke-width=".7"/></svg>
<div class="t" style="left:54px;top:570.14px;font-size:12px;font-weight:normal;color:#ffc060;letter-spacing:0">S = (60, 0)</div>
<div class="ab" style="left:20px;top:591px;width:10px;height:1px;border-top:1px dotted #808080"></div>
<svg class="ab" style="left:32px;top:585px" width="12" height="12" viewBox="0 0 12 12"><circle cx="6" cy="6" r="5" fill="url(#sph)" stroke="#6a98b0" stroke-width=".7"/></svg>
<div class="t" style="left:54px;top:586.14px;font-size:12px;font-weight:bold;color:#60c000;letter-spacing:-.15px">T = (60, 30)</div>
<div class="ab" style="left:20px;top:607px;width:10px;height:1px;border-top:1px dotted #808080"></div>
<svg class="ab" style="left:32px;top:601px" width="12" height="12" viewBox="0 0 12 12"><circle cx="6" cy="6" r="5" fill="url(#sph)" stroke="#6a98b0" stroke-width=".7"/></svg>
<div class="t" style="left:54px;top:602.14px;font-size:12px;font-weight:bold;color:#60c000;letter-spacing:-.15px">U = (70, 10)</div>
<div class="ab" style="left:20px;top:623px;width:10px;height:1px;border-top:1px dotted #808080"></div>
<svg class="ab" style="left:32px;top:617px" width="12" height="12" viewBox="0 0 12 12"><circle cx="6" cy="6" r="5" fill="url(#sph)" stroke="#6a98b0" stroke-width=".7"/></svg>
<div class="t" style="left:54px;top:618.14px;font-size:12px;font-weight:normal;color:#ffc060;letter-spacing:0">V = (70, 0)</div>
<div class="ab" style="left:20px;top:639px;width:10px;height:1px;border-top:1px dotted #808080"></div>
<svg class="ab" style="left:32px;top:633px" width="12" height="12" viewBox="0 0 12 12"><circle cx="6" cy="6" r="5" fill="url(#sph)" stroke="#6a98b0" stroke-width=".7"/></svg>
<div class="t" style="left:54px;top:634.14px;font-size:12px;font-weight:bold;color:#ff0000;letter-spacing:-.15px">W = (72, 0)</div>
<div class="ab" style="left:20px;top:655px;width:10px;height:1px;border-top:1px dotted #808080"></div>
<svg class="ab" style="left:32px;top:649px" width="12" height="12" viewBox="0 0 12 12"><circle cx="6" cy="6" r="5" fill="url(#sph)" stroke="#6a98b0" stroke-width=".7"/></svg>
<div class="t" style="left:54px;top:650.14px;font-size:12px;font-weight:bold;color:#60c000;letter-spacing:-.15px">X = (80, 0)</div>
<div class="ab" style="left:9px;top:715px;width:165px;height:19px;background:#f0f0f0"></div>
<div class="ab" style="left:30px;top:715px;width:114px;height:19px;background:#cdcdcd"></div>
<svg class="ab" style="left:14px;top:720px" width="9" height="10" viewBox="0 0 9 10"><path d="M7 1 L2.5 5 L7 9" fill="none" stroke="#555" stroke-width="1.6"/></svg>
<svg class="ab" style="left:158px;top:720px" width="9" height="10" viewBox="0 0 9 10"><path d="M2 1 L6.5 5 L2 9" fill="none" stroke="#555" stroke-width="1.6"/></svg>
<div class="ab" style="left:177px;top:115px;width:1px;height:620px;background:#909090"></div>
<div class="ab" style="left:178px;top:133px;width:339px;height:1px;background:#a9a9a9"></div>
<div class="ab" style="left:178px;top:160px;width:339px;height:1px;background:#a9a9a9"></div>
<div class="ab" style="left:521px;top:115px;width:1px;height:620px;background:#909090"></div>
<svg class="ab" style="left:184px;top:122px" width="9" height="5" viewBox="0 0 9 5"><path d="M0 0 L8.5 0 L4.25 4.8 Z" fill="#6a6a6a"/></svg>
<div class="t" style="left:200px;top:119.3px;font-size:12.5px;color:#333">Spreadsheet</div>
<div class="ab" style="left:500px;top:117px;width:14px;height:14px;border:1px solid #a8a8a8;background:#f0f0f0"></div>
<svg class="ab" style="left:500px;top:117px" width="14" height="14" viewBox="0 0 14 14"><path d="M4 4 L10 10 M10 4 L4 10" stroke="#222" stroke-width="1"/></svg>
<div class="t" style="left:184px;top:137px;font-size:16px;font-family:'Liberation Serif',serif;font-style:italic;color:#111">f<span style="font-size:14px">x</span></div>
<div class="ab" style="left:204px;top:137px;width:1px;height:20px;background:#707070"></div>
<div class="ab" style="left:256px;top:137px;width:1px;height:20px;background:#707070"></div>
<div class="ab" style="left:331px;top:137px;width:1px;height:20px;background:#707070"></div>
<div class="ab" style="left:378px;top:137px;width:1px;height:20px;background:#707070"></div>
<div class="t" style="left:214px;top:141px;font-size:12px;font-weight:bold;color:#000">B</div>
<div class="t" style="left:239px;top:141px;font-size:12px;font-style:italic;color:#000">I</div>
<div class="ab" style="left:264px;top:139px;width:14px;height:16px;border:1px solid #a0a0a0;border-radius:1px;background:#f8f8f8"></div>
<div class="ab" style="left:267px;top:142px;width:8px;height:1px;background:#808080"></div>
<div class="ab" style="left:267px;top:145px;width:6px;height:1px;background:#808080"></div>
<div class="ab" style="left:267px;top:148px;width:8px;height:1px;background:#808080"></div>
<div class="ab" style="left:267px;top:151px;width:6px;height:1px;background:#808080"></div>
<div class="ab" style="left:287px;top:139px;width:14px;height:16px;border:1px solid #a0a0a0;border-radius:1px;background:#f8f8f8"></div>
<div class="ab" style="left:290px;top:142px;width:8px;height:1px;background:#808080"></div>
<div class="ab" style="left:291px;top:145px;width:6px;height:1px;background:#808080"></div>
<div class="ab" style="left:290px;top:148px;width:8px;height:1px;background:#808080"></div>
<div class="ab" style="left:291px;top:151px;width:6px;height:1px;background:#808080"></div>
<div class="ab" style="left:310px;top:139px;width:14px;height:16px;border:1px solid #a0a0a0;border-radius:1px;background:#f8f8f8"></div>
<div class="ab" style="left:313px;top:142px;width:8px;height:1px;background:#808080"></div>
<div class="ab" style="left:315px;top:145px;width:6px;height:1px;background:#808080"></div>
<div class="ab" style="left:313px;top:148px;width:8px;height:1px;background:#808080"></div>
<div class="ab" style="left:315px;top:151px;width:6px;height:1px;background:#808080"></div>
<div class="ab" style="left:339px;top:142px;width:17px;height:11px;border:1px solid #3a3a5a;background:#c8c8f8"></div>
<svg class="ab" style="left:359px;top:144px" width="9" height="6" viewBox="0 0 9 6"><path d="M0.5 0.5 L8.5 0.5 L4.5 5 Z" fill="#707070"/></svg>
<div class="ab" style="left:384px;top:138px;width:17px;height:17px;background:#fff"></div>
<div class="ab" style="left:386px;top:140px;width:13px;height:13px;border:1px solid #000;background:#fff"></div>
<div class="ab" style="left:392px;top:141px;width:1px;height:11px;border-left:1px dotted #777"></div>
<div class="ab" style="left:387px;top:146px;width:11px;height:1px;border-top:1px dotted #777"></div>
<svg class="ab" style="left:404px;top:144px" width="9" height="6" viewBox="0 0 9 6"><path d="M0.5 0.5 L8.5 0.5 L4.5 5 Z" fill="#707070"/></svg>
<div class="ab" style="left:178px;top:161px;width:340px;height:574px;background:#fff"></div>
<div class="ab" style="left:178px;top:182px;width:336px;height:22px;background:#ffc0cb"></div>
<div class="ab" style="left:178px;top:204px;width:336px;height:22px;background:#ffecd6"></div>
<div class="ab" style="left:178px;top:226px;width:336px;height:22px;background:#ffecd6"></div>
<div class="ab" style="left:178px;top:248px;width:336px;height:22px;background:#ffecd6"></div>
<div class="ab" style="left:178px;top:270px;width:336px;height:22px;background:#ffc0cb"></div>
<div class="ab" style="left:178px;top:292px;width:336px;height:22px;background:#ffecd6"></div>
<div class="ab" style="left:178px;top:314px;width:336px;height:22px;background:#dcdcdc"></div>
<div class="ab" style="left:178px;top:336px;width:336px;height:22px;background:#dcdcdc"></div>
<div class="ab" style="left:178px;top:358px;width:336px;height:22px;background:#ffecd6"></div>
<div class="ab" style="left:178px;top:380px;width:336px;height:22px;background:#ffc0cb"></div>
<div class="ab" style="left:178px;top:402px;width:336px;height:22px;background:#dcdcdc"></div>
<div class="ab" style="left:178px;top:424px;width:336px;height:22px;background:#dcdcdc"></div>
<div class="ab" style="left:178px;top:446px;width:336px;height:22px;background:#ffecd6"></div>
<div class="ab" style="left:178px;top:468px;width:336px;height:22px;background:#d0f0c0"></div>
<div class="ab" style="left:178px;top:490px;width:336px;height:22px;background:#ffecd6"></div>
<div class="ab" style="left:178px;top:512px;width:336px;height:22px;background:#dcdcdc"></div>
<div class="ab" style="left:178px;top:534px;width:336px;height:22px;background:#ffecd6"></div>
<div class="ab" style="left:178px;top:556px;width:336px;height:22px;background:#d0f0c0"></div>
<div class="ab" style="left:178px;top:578px;width:336px;height:22px;background:#ffff00"></div>
<div class="ab" style="left:178px;top:600px;width:336px;height:22px;background:#ffecd6"></div>
<div class="ab" style="left:178px;top:622px;width:336px;height:22px;background:#d0f0c0"></div>
<div class="ab" style="left:178px;top:644px;width:336px;height:22px;background:#ffecd6"></div>
<div class="ab" style="left:178px;top:666px;width:336px;height:22px;background:#ffc0cb"></div>
<div class="ab" style="left:178px;top:688px;width:336px;height:22px;background:#d0f0c0"></div>
<div class="ab" style="left:178px;top:182px;width:337px;height:1px;background:#000"></div>
<div class="ab" style="left:178px;top:204px;width:337px;height:1px;background:#000"></div>
<div class="ab" style="left:178px;top:226px;width:337px;height:1px;background:#000"></div>
<div class="ab" style="left:178px;top:248px;width:337px;height:1px;background:#000"></div>
<div class="ab" style="left:178px;top:270px;width:337px;height:1px;background:#000"></div>
<div class="ab" style="left:178px;top:292px;width:337px;height:1px;background:#000"></div>
<div class="ab" style="left:178px;top:314px;width:337px;height:1px;background:#000"></div>
<div class="ab" style="left:178px;top:336px;width:337px;height:1px;background:#000"></div>
<div class="ab" style="left:178px;top:358px;width:337px;height:1px;background:#000"></div>
<div class="ab" style="left:178px;top:380px;width:337px;height:1px;background:#000"></div>
<div class="ab" style="left:178px;top:402px;width:337px;height:1px;background:#000"></div>
<div class="ab" style="left:178px;top:424px;width:337px;height:1px;background:#000"></div>
<div class="ab" style="left:178px;top:446px;width:337px;height:1px;background:#000"></div>
<div class="ab" style="left:178px;top:468px;width:337px;height:1px;background:#000"></div>
<div class="ab" style="left:178px;top:490px;width:337px;height:1px;background:#000"></div>
<div class="ab" style="left:178px;top:512px;width:337px;height:1px;background:#000"></div>
<div class="ab" style="left:178px;top:534px;width:337px;height:1px;background:#000"></div>
<div class="ab" style="left:178px;top:556px;width:337px;height:1px;background:#000"></div>
<div class="ab" style="left:178px;top:578px;width:337px;height:1px;background:#000"></div>
<div class="ab" style="left:178px;top:600px;width:337px;height:1px;background:#000"></div>
<div class="ab" style="left:178px;top:622px;width:337px;height:1px;background:#000"></div>
<div class="ab" style="left:178px;top:644px;width:337px;height:1px;background:#000"></div>
<div class="ab" style="left:178px;top:666px;width:337px;height:1px;background:#000"></div>
<div class="ab" style="left:178px;top:688px;width:337px;height:1px;background:#000"></div>
<div class="ab" style="left:178px;top:710px;width:337px;height:1px;background:#000"></div>
<div class="ab" style="left:178px;top:732px;width:337px;height:1px;background:#000"></div>
<div class="ab" style="left:228px;top:161px;width:1px;height:574px;background:#000"></div>
<div class="ab" style="left:290px;top:161px;width:1px;height:574px;background:#000"></div>
<div class="ab" style="left:377px;top:161px;width:1px;height:574px;background:#000"></div>
<div class="ab" style="left:514px;top:161px;width:1px;height:574px;background:#000"></div>
<div class="t" style="left:182px;top:165.39px;font-size:12.3px;color:#000">x (rods)</div>
<div class="t" style="left:234px;top:165.39px;font-size:12.3px;color:#000">y (pillars)</div>
<div class="t" style="left:296px;top:165.39px;font-size:12.3px;color:#000">Profit ($)=40...</div>
<div class="t" style="left:0px;top:165.39px;font-size:12.3px;color:#000"></div>
<div class="t" style="left:228px;width:57px;text-align:right;top:187.59px;font-size:12.3px;color:#000">50</div>
<div class="t" style="left:383px;top:187.59px;font-size:12.3px;color:#000">intersection</div>
<div class="t" style="left:178px;width:45px;text-align:right;top:209.59px;font-size:12.3px;color:#000">20</div>
<div class="t" style="left:228px;width:57px;text-align:right;top:209.59px;font-size:12.3px;color:#000">40</div>
<div class="t" style="left:290px;width:82px;text-align:right;top:209.59px;font-size:12.3px;color:#000">20000</div>
<div class="t" style="left:383px;top:209.59px;font-size:12.3px;color:#000">on edge</div>
<div class="t" style="left:178px;width:45px;text-align:right;top:231.59px;font-size:12.3px;color:#000">20</div>
<div class="t" style="left:228px;width:57px;text-align:right;top:231.59px;font-size:12.3px;color:#000">30</div>
<div class="t" style="left:290px;width:82px;text-align:right;top:231.59px;font-size:12.3px;color:#000">17000</div>
<div class="t" style="left:383px;top:231.59px;font-size:12.3px;color:#000">on edge</div>
<div class="t" style="left:178px;width:45px;text-align:right;top:253.59px;font-size:12.3px;color:#000">20</div>
<div class="t" style="left:228px;width:57px;text-align:right;top:253.59px;font-size:12.3px;color:#000">20</div>
<div class="t" style="left:290px;width:82px;text-align:right;top:253.59px;font-size:12.3px;color:#000">14000</div>
<div class="t" style="left:383px;top:253.59px;font-size:12.3px;color:#000">on edge</div>
<div class="t" style="left:178px;width:45px;text-align:right;top:275.59px;font-size:12.3px;color:#000">20</div>
<div class="t" style="left:228px;width:57px;text-align:right;top:275.59px;font-size:12.3px;color:#000">0</div>
<div class="t" style="left:290px;width:82px;text-align:right;top:275.59px;font-size:12.3px;color:#000">8000</div>
<div class="t" style="left:383px;top:275.59px;font-size:12.3px;color:#000">intersection</div>
<div class="t" style="left:178px;width:45px;text-align:right;top:297.59px;font-size:12.3px;color:#000">30</div>
<div class="t" style="left:228px;width:57px;text-align:right;top:297.59px;font-size:12.3px;color:#000">45</div>
<div class="t" style="left:290px;width:82px;text-align:right;top:297.59px;font-size:12.3px;color:#000">25500</div>
<div class="t" style="left:383px;top:297.59px;font-size:12.3px;color:#000">on edge</div>
<div class="t" style="left:178px;width:45px;text-align:right;top:319.59px;font-size:12.3px;color:#0000ff">30</div>
<div class="t" style="left:228px;width:57px;text-align:right;top:319.59px;font-size:12.3px;color:#0000ff">30</div>
<div class="t" style="left:290px;width:82px;text-align:right;top:319.59px;font-size:12.3px;color:#0000ff">21000</div>
<div class="t" style="left:383px;top:319.59px;font-size:12.3px;color:#0000ff">inside feasible region</div>
<div class="t" style="left:178px;width:45px;text-align:right;top:341.59px;font-size:12.3px;color:#0000ff">30</div>
<div class="t" style="left:228px;width:57px;text-align:right;top:341.59px;font-size:12.3px;color:#0000ff">20</div>
<div class="t" style="left:290px;width:82px;text-align:right;top:341.59px;font-size:12.3px;color:#0000ff">18000</div>
<div class="t" style="left:383px;top:341.59px;font-size:12.3px;color:#0000ff">inside feasible region</div>
<div class="t" style="left:178px;width:45px;text-align:right;top:363.59px;font-size:12.3px;color:#000">30</div>
<div class="t" style="left:228px;width:57px;text-align:right;top:363.59px;font-size:12.3px;color:#000">0</div>
<div class="t" style="left:290px;width:82px;text-align:right;top:363.59px;font-size:12.3px;color:#000">12000</div>
<div class="t" style="left:383px;top:363.59px;font-size:12.3px;color:#000">on edge</div>
<div class="t" style="left:178px;width:45px;text-align:right;top:385.59px;font-size:12.3px;color:#000">40</div>
<div class="t" style="left:228px;width:57px;text-align:right;top:385.59px;font-size:12.3px;color:#000">40</div>
<div class="t" style="left:290px;width:82px;text-align:right;top:385.59px;font-size:12.3px;color:#000">28000</div>
<div class="t" style="left:383px;top:385.59px;font-size:12.3px;color:#000">intersection</div>
<div class="t" style="left:178px;width:45px;text-align:right;top:407.59px;font-size:12.3px;color:#000">40</div>
<div class="t" style="left:228px;width:57px;text-align:right;top:407.59px;font-size:12.3px;color:#000">30</div>
<div class="t" style="left:290px;width:82px;text-align:right;top:407.59px;font-size:12.3px;color:#000">25000</div>
<div class="t" style="left:383px;top:407.59px;font-size:12.3px;color:#000">inside feasible region</div>
<div class="t" style="left:178px;width:45px;text-align:right;top:429.59px;font-size:12.3px;color:#000">40</div>
<div class="t" style="left:228px;width:57px;text-align:right;top:429.59px;font-size:12.3px;color:#000">20</div>
<div class="t" style="left:290px;width:82px;text-align:right;top:429.59px;font-size:12.3px;color:#000">22000</div>
<div class="t" style="left:383px;top:429.59px;font-size:12.3px;color:#000">inside feasible region</div>
<div class="t" style="left:178px;width:45px;text-align:right;top:451.59px;font-size:12.3px;color:#000">40</div>
<div class="t" style="left:228px;width:57px;text-align:right;top:451.59px;font-size:12.3px;color:#000">0</div>
<div class="t" style="left:290px;width:82px;text-align:right;top:451.59px;font-size:12.3px;color:#000">16000</div>
<div class="t" style="left:383px;top:451.59px;font-size:12.3px;color:#000">on edge</div>
<div class="t" style="left:178px;width:45px;text-align:right;top:473.59px;font-size:12.3px;color:#000">50</div>
<div class="t" style="left:228px;width:57px;text-align:right;top:473.59px;font-size:12.3px;color:#000">35</div>
<div class="t" style="left:290px;width:82px;text-align:right;top:473.59px;font-size:12.3px;color:#000">30500</div>
<div class="t" style="left:383px;top:473.59px;font-size:12.3px;color:#000">outside feasible region</div>
<div class="t" style="left:178px;width:45px;text-align:right;top:495.59px;font-size:12.3px;color:#000">50</div>
<div class="t" style="left:228px;width:57px;text-align:right;top:495.59px;font-size:12.3px;color:#000">30</div>
<div class="t" style="left:290px;width:82px;text-align:right;top:495.59px;font-size:12.3px;color:#000">29000</div>
<div class="t" style="left:383px;top:495.59px;font-size:12.3px;color:#000">on edge</div>
<div class="t" style="left:178px;width:45px;text-align:right;top:517.59px;font-size:12.3px;color:#0000ff">50</div>
<div class="t" style="left:228px;width:57px;text-align:right;top:517.59px;font-size:12.3px;color:#0000ff">20</div>
<div class="t" style="left:290px;width:82px;text-align:right;top:517.59px;font-size:12.3px;color:#0000ff">26000</div>
<div class="t" style="left:383px;top:517.59px;font-size:12.3px;color:#0000ff">inside feasible region</div>
<div class="t" style="left:178px;width:45px;text-align:right;top:539.59px;font-size:12.3px;color:#000">50</div>
<div class="t" style="left:228px;width:57px;text-align:right;top:539.59px;font-size:12.3px;color:#000">0</div>
<div class="t" style="left:290px;width:82px;text-align:right;top:539.59px;font-size:12.3px;color:#000">20000</div>
<div class="t" style="left:383px;top:539.59px;font-size:12.3px;color:#000">on edge</div>
<div class="t" style="left:178px;width:45px;text-align:right;top:561.59px;font-size:12.3px;color:#000">60</div>
<div class="t" style="left:228px;width:57px;text-align:right;top:561.59px;font-size:12.3px;color:#000">30</div>
<div class="t" style="left:290px;width:82px;text-align:right;top:561.59px;font-size:12.3px;color:#000">33000</div>
<div class="t" style="left:383px;top:561.59px;font-size:12.3px;color:#000">outside feasible region</div>
<div class="t" style="left:178px;width:45px;text-align:right;top:583.59px;font-size:12.3px;color:#000">60</div>
<div class="t" style="left:228px;width:57px;text-align:right;top:583.59px;font-size:12.3px;color:#000">20</div>
<div class="t" style="left:290px;width:82px;text-align:right;top:583.59px;font-size:12.3px;color:#000">30000</div>
<div class="t" style="left:383px;top:583.59px;font-size:12.3px;color:#000">Max profit intersection</div>
<div class="t" style="left:178px;width:45px;text-align:right;top:605.59px;font-size:12.3px;color:#000">60</div>
<div class="t" style="left:228px;width:57px;text-align:right;top:605.59px;font-size:12.3px;color:#000">0</div>
<div class="t" style="left:290px;width:82px;text-align:right;top:605.59px;font-size:12.3px;color:#000">24000</div>
<div class="t" style="left:383px;top:605.59px;font-size:12.3px;color:#000">on edge</div>
<div class="t" style="left:178px;width:45px;text-align:right;top:627.59px;font-size:12.3px;color:#000">70</div>
<div class="t" style="left:228px;width:57px;text-align:right;top:627.59px;font-size:12.3px;color:#000">10</div>
<div class="t" style="left:290px;width:82px;text-align:right;top:627.59px;font-size:12.3px;color:#000">31000</div>
<div class="t" style="left:383px;top:627.59px;font-size:12.3px;color:#000">outside feasibe region</div>
<div class="t" style="left:178px;width:45px;text-align:right;top:649.59px;font-size:12.3px;color:#000">70</div>
<div class="t" style="left:228px;width:57px;text-align:right;top:649.59px;font-size:12.3px;color:#000">0</div>
<div class="t" style="left:290px;width:82px;text-align:right;top:649.59px;font-size:12.3px;color:#000">28000</div>
<div class="t" style="left:383px;top:649.59px;font-size:12.3px;color:#000">on edge</div>
<div class="t" style="left:178px;width:45px;text-align:right;top:671.59px;font-size:12.3px;color:#000">72</div>
<div class="t" style="left:228px;width:57px;text-align:right;top:671.59px;font-size:12.3px;color:#000">0</div>
<div class="t" style="left:290px;width:82px;text-align:right;top:671.59px;font-size:12.3px;color:#000">28800</div>
<div class="t" style="left:383px;top:671.59px;font-size:12.3px;color:#000">Intersection</div>
<div class="t" style="left:178px;width:45px;text-align:right;top:693.59px;font-size:12.3px;color:#000">80</div>
<div class="t" style="left:228px;width:57px;text-align:right;top:693.59px;font-size:12.3px;color:#000">0</div>
<div class="t" style="left:290px;width:82px;text-align:right;top:693.59px;font-size:12.3px;color:#000">32000</div>
<div class="t" style="left:383px;top:693.59px;font-size:12.3px;color:#000">outside feasible region</div>
<div class="ab" style="left:522px;top:115px;width:840px;height:18px;background:#f0f0f0"></div>
<div class="ab" style="left:522px;top:133px;width:840px;height:1px;background:#a9a9a9"></div>
<svg class="ab" style="left:530px;top:120px" width="5" height="9" viewBox="0 0 5 9"><path d="M0.5 0.5 L4.5 4.5 L0.5 8.5 Z" fill="#6a6a6a"/></svg>
<div class="t" style="left:544px;top:119.5px;font-size:12px;font-weight:bold;color:#333">Graphics</div>
<div class="ab" style="left:1345px;top:117px;width:14px;height:14px;border:1px solid #a8a8a8;background:#f0f0f0"></div>
<svg class="ab" style="left:1345px;top:117px" width="14" height="14" viewBox="0 0 14 14"><path d="M4 4 L10 10 M10 4 L4 10" stroke="#222" stroke-width="1"/></svg>
<svg class="ab" style="left:1365px;top:395px" width="7" height="11" viewBox="0 0 7 11"><path d="M6 0.8 L1 5.5 L6 10.2 Z" fill="none" stroke="#333" stroke-width="1"/></svg>
<svg class="ab" style="left:522px;top:134px;overflow:hidden" width="840" height="601" viewBox="0 0 840 601" font-family="Liberation Sans">
<rect x="0" y="0" width="840" height="601" fill="#fff"/>
<line x1="0" y1="542.5" x2="839" y2="542.5" stroke="#000" stroke-width="1"/>
<line x1="33.5" y1="1" x2="33.5" y2="601" stroke="#000" stroke-width="1"/>
<path d="M834 538.3 L839 542.3 L834 546.3" fill="none" stroke="#000" stroke-width="1"/>
<path d="M29.299999999999955 6 L33.299999999999955 1 L37.299999999999955 6" fill="none" stroke="#000" stroke-width="1"/>
<line x1="88.53" y1="542.3" x2="88.53" y2="546.3" stroke="#000" stroke-width="1"/>
<text x="91.03" y="554.90" text-anchor="middle" font-size="10" fill="#000">10</text>
<line x1="143.76" y1="542.3" x2="143.76" y2="546.3" stroke="#000" stroke-width="1"/>
<text x="146.26" y="554.90" text-anchor="middle" font-size="10" fill="#000">20</text>
<line x1="198.99" y1="542.3" x2="198.99" y2="546.3" stroke="#000" stroke-width="1"/>
<text x="201.49" y="554.90" text-anchor="middle" font-size="10" fill="#000">30</text>
<line x1="254.22" y1="542.3" x2="254.22" y2="546.3" stroke="#000" stroke-width="1"/>
<text x="256.72" y="554.90" text-anchor="middle" font-size="10" fill="#000">40</text>
<line x1="309.45" y1="542.3" x2="309.45" y2="546.3" stroke="#000" stroke-width="1"/>
<text x="311.95" y="554.90" text-anchor="middle" font-size="10" fill="#000">50</text>
<line x1="364.68" y1="542.3" x2="364.68" y2="546.3" stroke="#000" stroke-width="1"/>
<text x="367.18" y="554.90" text-anchor="middle" font-size="10" fill="#000">60</text>
<line x1="419.91" y1="542.3" x2="419.91" y2="546.3" stroke="#000" stroke-width="1"/>
<text x="422.41" y="554.90" text-anchor="middle" font-size="10" fill="#000">70</text>
<line x1="475.14" y1="542.3" x2="475.14" y2="546.3" stroke="#000" stroke-width="1"/>
<text x="477.64" y="554.90" text-anchor="middle" font-size="10" fill="#000">80</text>
<line x1="530.37" y1="542.3" x2="530.37" y2="546.3" stroke="#000" stroke-width="1"/>
<text x="532.87" y="554.90" text-anchor="middle" font-size="10" fill="#000">90</text>
<line x1="585.60" y1="542.3" x2="585.60" y2="546.3" stroke="#000" stroke-width="1"/>
<text x="588.10" y="554.90" text-anchor="middle" font-size="10" fill="#000">100</text>
<line x1="640.83" y1="542.3" x2="640.83" y2="546.3" stroke="#000" stroke-width="1"/>
<text x="643.33" y="554.90" text-anchor="middle" font-size="10" fill="#000">110</text>
<line x1="696.06" y1="542.3" x2="696.06" y2="546.3" stroke="#000" stroke-width="1"/>
<text x="698.56" y="554.90" text-anchor="middle" font-size="10" fill="#000">120</text>
<line x1="751.29" y1="542.3" x2="751.29" y2="546.3" stroke="#000" stroke-width="1"/>
<text x="753.79" y="554.90" text-anchor="middle" font-size="10" fill="#000">130</text>
<line x1="806.52" y1="542.3" x2="806.52" y2="546.3" stroke="#000" stroke-width="1"/>
<text x="809.02" y="554.90" text-anchor="middle" font-size="10" fill="#000">140</text>
<text x="41.30" y="555.60" text-anchor="middle" font-size="10" fill="#000">0</text>
<line x1="29.30" y1="450.34" x2="33.299999999999955" y2="450.34" stroke="#000" stroke-width="1"/>
<text x="28.30" y="453.94" text-anchor="end" font-size="10" fill="#000">20</text>
<line x1="29.30" y1="358.38" x2="33.299999999999955" y2="358.38" stroke="#000" stroke-width="1"/>
<text x="28.30" y="361.98" text-anchor="end" font-size="10" fill="#000">40</text>
<line x1="29.30" y1="266.42" x2="33.299999999999955" y2="266.42" stroke="#000" stroke-width="1"/>
<text x="28.30" y="270.02" text-anchor="end" font-size="10" fill="#000">60</text>
<line x1="29.30" y1="174.46" x2="33.299999999999955" y2="174.46" stroke="#000" stroke-width="1"/>
<text x="28.30" y="178.06" text-anchor="end" font-size="10" fill="#000">80</text>
<line x1="29.30" y1="82.50" x2="33.299999999999955" y2="82.50" stroke="#000" stroke-width="1"/>
<text x="28.30" y="86.10" text-anchor="end" font-size="10" fill="#000">100</text>
<text x="26.80" y="539.30" text-anchor="end" font-size="10" fill="#000">0</text>
<polygon points="-21.93,634.26 916.98,634.26 916.98,542.30 -21.93,542.30" fill="#ffc060" fill-opacity="0.25"/>
<line x1="0" y1="542.5" x2="840" y2="542.5" stroke="#ffc060" stroke-opacity=".625" stroke-width="2.2"/>
<text x="40" y="537" font-size="13" fill="#ffc060">a</text>
<polygon points="-21.93,634.26 143.76,634.26 143.76,-55.44 -21.93,-55.44" fill="#0000ff" fill-opacity="0.25"/>
<line x1="144" y1="0" x2="144" y2="601" stroke="#0000ff" stroke-opacity=".625" stroke-width="2"/>
<text x="134.5" y="556" font-size="12.5" fill="#0000ff" stroke="#0000ff" stroke-width=".12">b</text>
<polygon points="-21.93,243.43 916.98,634.26 916.98,-55.44 -21.93,-55.44" fill="#ff0000" fill-opacity="0.25"/>
<line x1="-21.93" y1="243.43" x2="916.98" y2="634.26" stroke="#ff0000" stroke-width="1.15" transform="translate(-0.4,0)"/>
<text x="5.8" y="274" font-size="13" fill="#ff0000" stroke="#ff0000" stroke-width=".15">c</text>
<polygon points="-21.93,128.48 916.98,910.14 916.98,-55.44 -21.93,-55.44" fill="#004000" fill-opacity="0.25"/>
<line x1="-21.93" y1="128.48" x2="916.98" y2="910.14" stroke="#004000" stroke-width="1.05" transform="translate(-0.4,0)"/>
<text x="5.8" y="173.8" font-size="12.5" fill="#004000" stroke="#004000" stroke-width=".15">d</text>
<polygon points="0.16,-55.44 497.23,634.26 1469.28,634.26 1469.28,-55.44" fill="#0000ff" fill-opacity="0.25"/>
<line x1="0.16" y1="-55.44" x2="497.23" y2="634.26" stroke="#0000ff" stroke-width="1.1" transform="translate(-0.4,0)"/>
<text x="53.5" y="16" font-size="13" fill="#0000ff" stroke="#0000ff" stroke-width=".12">e</text>
<circle cx="143.76" cy="312.40" r="3.2" fill="#ff0000" stroke="#000" stroke-width="1.2"/>
<circle cx="143.76" cy="358.38" r="3.2" fill="#ffc060" stroke="#000" stroke-width="1.2"/>
<circle cx="143.76" cy="404.36" r="3.2" fill="#ffc060" stroke="#000" stroke-width="1.2"/>
<circle cx="143.76" cy="450.34" r="3.2" fill="#ffc060" stroke="#000" stroke-width="1.2"/>
<circle cx="143.76" cy="542.30" r="3.2" fill="#ff0000" stroke="#000" stroke-width="1.2"/>
<circle cx="198.99" cy="335.39" r="3.2" fill="#ffc060" stroke="#000" stroke-width="1.2"/>
<circle cx="198.99" cy="404.36" r="3.2" fill="#0000ff" stroke="#000" stroke-width="1.2"/>
<circle cx="198.99" cy="450.34" r="3.2" fill="#0000ff" stroke="#000" stroke-width="1.2"/>
<circle cx="198.99" cy="542.30" r="3.2" fill="#ffc060" stroke="#000" stroke-width="1.2"/>
<circle cx="254.22" cy="358.38" r="3.2" fill="#ff0000" stroke="#000" stroke-width="1.2"/>
<circle cx="254.22" cy="404.36" r="3.2" fill="#0000ff" stroke="#000" stroke-width="1.2"/>
<circle cx="254.22" cy="450.34" r="3.2" fill="#0000ff" stroke="#000" stroke-width="1.2"/>
<circle cx="254.22" cy="542.30" r="3.2" fill="#ffc060" stroke="#000" stroke-width="1.2"/>
<circle cx="309.45" cy="381.37" r="3.2" fill="#60c000" stroke="#000" stroke-width="1.2"/>
<circle cx="309.45" cy="404.36" r="3.2" fill="#ffc060" stroke="#000" stroke-width="1.2"/>
<circle cx="309.45" cy="450.34" r="3.2" fill="#0000ff" stroke="#000" stroke-width="1.2"/>
<circle cx="309.45" cy="542.30" r="3.2" fill="#ffc060" stroke="#000" stroke-width="1.2"/>
<circle cx="364.68" cy="450.34" r="3.2" fill="#ff0000" stroke="#000" stroke-width="1.2"/>
<circle cx="364.68" cy="542.30" r="3.2" fill="#ffc060" stroke="#000" stroke-width="1.2"/>
<circle cx="364.68" cy="404.36" r="3.2" fill="#60c000" stroke="#000" stroke-width="1.2"/>
<circle cx="419.91" cy="496.32" r="3.2" fill="#60c000" stroke="#000" stroke-width="1.2"/>
<circle cx="419.91" cy="542.30" r="3.2" fill="#ffc060" stroke="#000" stroke-width="1.2"/>
<circle cx="430.96" cy="542.30" r="3.2" fill="#ff0000" stroke="#000" stroke-width="1.2"/>
<circle cx="475.14" cy="542.30" r="3.2" fill="#60c000" stroke="#000" stroke-width="1.2"/>
<text x="148.06" y="306.10" font-size="12.2" fill="#ff0000">A</text>
<text x="148.06" y="352.08" font-size="12.2" fill="#ffc060">B</text>
<text x="148.06" y="398.06" font-size="12.2" fill="#ffc060">C</text>
<text x="148.06" y="444.04" font-size="12.2" fill="#ffc060">D</text>
<text x="148.06" y="536.00" font-size="12.2" fill="#ff0000">E</text>
<text x="203.29" y="329.09" font-size="12.2" fill="#ffc060">F</text>
<text x="203.29" y="398.06" font-size="12.2" fill="#0000ff">G</text>
<text x="203.29" y="444.04" font-size="12.2" fill="#0000ff">H</text>
<text x="203.29" y="536.00" font-size="12.2" fill="#ffc060">I</text>
<text x="258.52" y="352.08" font-size="12.2" fill="#ff0000">J</text>
<text x="258.52" y="398.06" font-size="12.2" fill="#0000ff">K</text>
<text x="258.52" y="444.04" font-size="12.2" fill="#0000ff">L</text>
<text x="258.52" y="536.00" font-size="12.2" fill="#ffc060">M</text>
<text x="313.75" y="375.07" font-size="12.2" fill="#60c000">N</text>
<text x="313.75" y="398.06" font-size="12.2" fill="#ffc060">O</text>
<text x="313.75" y="444.04" font-size="12.2" fill="#0000ff">P</text>
<text x="313.75" y="536.00" font-size="12.2" fill="#ffc060">Q</text>
<text x="368.98" y="444.04" font-size="12.2" fill="#ff0000">R</text>
<text x="368.98" y="536.00" font-size="12.2" fill="#ffc060">S</text>
<text x="368.98" y="398.06" font-size="12.2" fill="#60c000">T</text>
<text x="424.21" y="490.02" font-size="12.2" fill="#60c000">U</text>
<text x="424.21" y="536.00" font-size="12.2" fill="#ffc060">V</text>
<text x="435.26" y="536.00" font-size="12.2" fill="#ff0000">W</text>
<text x="479.44" y="536.00" font-size="12.2" fill="#60c000">X</text>
<rect x="324.70000000000005" y="4" width="258.29999999999995" height="102" fill="#ffff96"/>
<text transform="translate(328.30,23.00) scale(0.935,1)" font-size="16.3" fill="#2a2aff" font-weight="normal" xml:space="preserve">Current Profit Equation</text>
<text transform="translate(328.30,47.00) scale(0.935,1)" font-size="16.3" fill="#2a2aff" font-weight="normal" xml:space="preserve">Profit Income = 400x + 300y</text>
<text transform="translate(328.30,71.00) scale(0.935,1)" font-size="16.3" fill="#2a2aff" font-weight="normal" xml:space="preserve">x: the number of rods manufactured</text>
<text transform="translate(328.30,95.00) scale(0.935,1)" font-size="16.3" fill="#2a2aff" font-weight="normal" xml:space="preserve">y: the number of pillars manufactured</text>
<rect x="583" y="4.5" width="224" height="60.19999999999999" fill="#ffc864"/>
<text x="586.40" y="20.00" font-size="12.1" fill="#000" font-weight="normal" xml:space="preserve">New Profit Equation</text>
<text x="586.40" y="37.80" font-size="12.1" fill="#000" font-weight="normal" xml:space="preserve">future profit= 500x+1000y  cost:$250000</text>
<text x="586.40" y="55.60" font-size="12.1" fill="#000" font-weight="normal" xml:space="preserve">No changes on the constraints</text>
<rect x="319.79999999999995" y="120" width="423.20000000000005" height="245.5" fill="#ffff66"/>
<text x="330.40" y="162.70" font-size="15.4" fill="#2a2aff" transform="translate(330.40,162.70) scale(1.2,1.12) translate(-330.40,-162.70)">≥</text>
<text x="330.40" y="186.70" font-size="15.4" fill="#2a2aff" transform="translate(330.40,186.70) scale(1.2,1.12) translate(-330.40,-186.70)">≥</text>
<text x="360.30" y="234.70" font-size="15.4" fill="#2a2aff" transform="translate(360.30,234.70) scale(1.2,1.12) translate(-360.30,-234.70)">≤</text>
<text x="354.60" y="282.70" font-size="15.4" fill="#2a2aff" transform="translate(354.60,282.70) scale(1.2,1.12) translate(-354.60,-282.70)">≤</text>
<text x="370.40" y="330.70" font-size="15.4" fill="#2a2aff" transform="translate(370.40,330.70) scale(1.2,1.12) translate(-370.40,-330.70)">≤</text>
<text transform="translate(322.70,138.70) scale(0.945,1)" font-size="16.3" fill="#2a2aff" font-weight="normal" xml:space="preserve">Constrains</text>
<text transform="translate(322.20,162.70) scale(0.945,1)" font-size="16.3" fill="#2a2aff" font-weight="normal" xml:space="preserve">x</text>
<text transform="translate(365.00,162.70) scale(0.945,1)" font-size="16.3" fill="#2a2aff" font-weight="normal" xml:space="preserve">The company can sell at least 20 rods and be integers</text>
<text transform="translate(342.60,162.70) scale(0.945,1)" font-size="16.3" fill="#2a2aff" font-weight="normal" xml:space="preserve">20</text>
<text transform="translate(322.20,186.70) scale(0.945,1)" font-size="16.3" fill="#2a2aff" font-weight="normal" xml:space="preserve">y</text>
<text transform="translate(342.60,186.70) scale(0.945,1)" font-size="16.3" fill="#2a2aff" font-weight="normal" xml:space="preserve">0</text>
<text transform="translate(369.10,186.70) scale(0.945,1)" font-size="16.3" fill="#2a2aff" font-weight="normal" xml:space="preserve">The rods production must be positive and integers</text>
<text transform="translate(322.20,234.70) scale(0.945,1)" font-size="16.3" fill="#2a2aff" font-weight="normal" xml:space="preserve">x+2y</text>
<text transform="translate(376.90,234.70) scale(0.945,1)" font-size="16.3" fill="#2a2aff" font-weight="normal" xml:space="preserve">120</text>
<text transform="translate(407.60,234.70) scale(0.945,1)" font-size="16.3" fill="#2a2aff" font-weight="normal" xml:space="preserve">drillng hours up to 120 hours/week,</text>
<text transform="translate(408.30,258.70) scale(0.945,1)" font-size="16.3" fill="#2a2aff" font-weight="normal" xml:space="preserve">1 for each rod, 2 for each pillar</text>
<text transform="translate(322.20,282.70) scale(0.945,1)" font-size="16.3" fill="#2a2aff" font-weight="normal" xml:space="preserve">x + y</text>
<text transform="translate(366.90,282.70) scale(0.945,1)" font-size="16.3" fill="#2a2aff" font-weight="normal" xml:space="preserve">80</text>
<text transform="translate(405.80,282.70) scale(0.945,1)" font-size="16.3" fill="#2a2aff" font-weight="normal" xml:space="preserve">grinding hours up to 80/week</text>
<text transform="translate(408.30,306.70) scale(0.945,1)" font-size="16.3" fill="#2a2aff" font-weight="normal" xml:space="preserve">1 hour for each rod, same for each pillar</text>
<text transform="translate(322.20,330.70) scale(0.945,1)" font-size="16.3" fill="#2a2aff" font-weight="normal" xml:space="preserve">x+0.6y</text>
<text transform="translate(383.00,330.70) scale(0.945,1)" font-size="16.3" fill="#2a2aff" font-weight="normal" xml:space="preserve">72</text>
<text transform="translate(407.60,330.70) scale(0.945,1)" font-size="16.3" fill="#2a2aff" font-weight="normal" xml:space="preserve">polishing hours up to 72/week</text>
<text transform="translate(412.80,354.70) scale(0.945,1)" font-size="16.3" fill="#2a2aff" font-weight="normal" xml:space="preserve">1 hour for each rod, 36 min/0.6 hr for each pillar</text>
<rect x="153.10000000000002" y="457" width="190.89999999999998" height="41.5" fill="#ffff66"/>
<text x="157.40" y="483.90" font-size="23.7" fill="#0099cc" font-weight="bold" xml:space="preserve">Feasible Region</text>
</svg>
</body></html>
